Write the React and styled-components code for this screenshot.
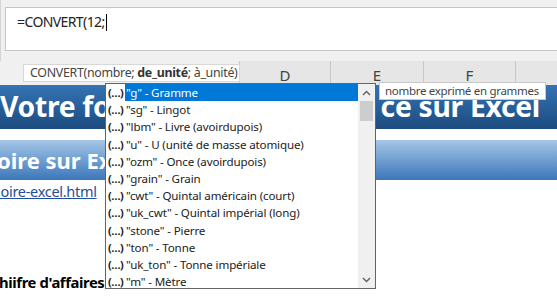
import React from "react";
import styled, { createGlobalStyle } from "styled-components";

const Global = createGlobalStyle`
  html, body { margin: 0; padding: 0; background: #fff; }
  body { width: 557px; height: 298px; overflow: hidden; font-family: "Noto Sans", "Open Sans", sans-serif; }
  #root { width: 557px; height: 298px; position: relative; overflow: hidden; }
`;

const Page = styled.div`
  width: 557px;
  height: 298px;
  position: relative;
  overflow: hidden;
  background: #fff;
`;

const Chrome = styled.div`
  background: #f0f0f0;
  padding: 7px 0 0 4px;
  border-left: 1px solid #d4d4d4;
  display: flex;
  flex-direction: column;
`;

const FormulaBox = styled.div`
  height: 44px;
  background: #fff;
  border: 1px solid #c6c6c6;
  border-right: none;
  padding: 5px 0 0 11px;
  box-sizing: border-box;
  display: flex;
  align-items: flex-start;
  font-size: 14px;
  line-height: 18px;
  color: #222;
  letter-spacing: -0.6px;
`;

const Caret = styled.span`
  display: inline-block;
  width: 1px;
  height: 17px;
  background: #000;
  margin-left: 1px;
  margin-top: 1px;
`;

const HeaderRow = styled.div`
  height: 23px;
  margin-top: 10px;
  margin-left: -5px;
  display: grid;
  grid-template-columns: 240px 91px 93px 92px 1fr;
  background: #e6e6e6;
`;

const ColHead = styled.div`
  border-right: 1px solid ${p => (p.$last ? "transparent" : "#c8c8c8")};
  display: flex;
  align-items: center;
  justify-content: center;
  font-size: 15px;
  color: #444;
  padding-top: 4px;
  box-sizing: border-box;
  background: ${p => (p.$blank ? "#f0f0f0" : "#e6e6e6")};
`;

const Banner = styled.div`
  height: 45px;
  background: linear-gradient(#3574b6, #1c4b7e);
  color: #fff;
  font-weight: 700;
  font-size: 28.3px;
  line-height: 45px;
  white-space: nowrap;
  overflow: hidden;
  letter-spacing: -0.3px;
  display: flex;
  padding-right: 17px;
`;

const BannerLead = styled.span`
  flex: 1;
  min-width: 0;
  overflow: hidden;
`;

const BannerTail = styled.span`
  flex: none;
`;

const Gap = styled.div`
  height: ${p => p.$h}px;
`;

const SubBanner = styled.div`
  height: 40px;
  background: linear-gradient(#a5c6e7, #3b77ba);
  color: #fff;
  font-weight: 700;
  font-size: 22px;
  line-height: 40px;
  white-space: nowrap;
  overflow: hidden;
  text-indent: -115px;
`;

const LinkLine = styled.div`
  font-size: 14.5px;
  line-height: 20px;
  color: #1f4e9a;
  text-decoration: underline;
  white-space: nowrap;
  text-indent: -66px;
  overflow: hidden;
  letter-spacing: -0.3px;
`;

const BoldLine = styled.div`
  margin-top: 71px;
  font-size: 14.8px;
  line-height: 20px;
  font-weight: 700;
  color: #000;
  white-space: nowrap;
  text-indent: -10px;
  overflow: hidden;
  letter-spacing: -0.4px;
`;

const ArgTip = styled.div`
  position: absolute;
  left: 23px;
  top: 64px;
  width: 217px;
  height: 18px;
  box-sizing: border-box;
  background: #fff;
  border: 1px solid #d8d8d8;
  font-size: 12.4px;
  line-height: 16px;
  color: #444;
  padding-left: 6px;
  white-space: nowrap;
  letter-spacing: -0.3px;
  b { font-weight: 700; color: #333; }
`;

const DescTip = styled.div`
  position: absolute;
  left: 379px;
  top: 82px;
  width: 167px;
  height: 18px;
  box-sizing: border-box;
  background: #fff;
  border: 1px solid #c8c8c8;
  font-size: 11.5px;
  line-height: 16px;
  color: #444;
  padding-left: 5px;
  white-space: nowrap;
  letter-spacing: -0.3px;
  overflow: hidden;
`;

const List = styled.div`
  position: absolute;
  left: 105px;
  top: 83px;
  width: 271px;
  height: 206px;
  box-sizing: border-box;
  background: #fff;
  border: 1px solid #646464;
  display: flex;
`;

const Items = styled.div`
  flex: 1;
  display: flex;
  flex-direction: column;
`;

const Item = styled.div`
  height: 17.2px;
  flex: none;
  display: flex;
  align-items: center;
  font-size: 11.6px;
  white-space: nowrap;
  letter-spacing: -0.15px;
`;

const Icon = styled.span`
  width: 19px;
  padding-left: 2px;
  box-sizing: border-box;
  font-size: 11px;
  font-weight: 700;
  color: #222;
  letter-spacing: -0.6px;
  flex: none;
`;

const Label = styled.span`
  flex: 1;
  height: 100%;
  display: flex;
  align-items: center;
  padding-left: 1px;
  background: ${p => (p.$sel ? "#0078d7" : "transparent")};
  color: ${p => (p.$sel ? "#fff" : "#222")};
`;

const Scroll = styled.div`
  width: 17px;
  background: #f0f0f0;
  display: flex;
  flex-direction: column;
  align-items: center;
`;

const Arrow = styled.div`
  height: 17px;
  width: 100%;
  display: flex;
  align-items: center;
  justify-content: center;
`;

const Thumb = styled.div`
  width: 13px;
  height: 20px;
  background: #cdcdcd;
`;

const Track = styled.div`
  flex: 1;
`;

const items = [
  '"g" - Gramme',
  '"sg" - Lingot',
  '"lbm" - Livre (avoirdupois)',
  '"u" - U (unité de masse atomique)',
  '"ozm" - Once (avoirdupois)',
  '"grain" - Grain',
  '"cwt" - Quintal américain (court)',
  '"uk_cwt" - Quintal impérial (long)',
  '"stone" - Pierre',
  '"ton" - Tonne',
  '"uk_ton" - Tonne impériale',
  '"m" - Mètre',
];

const Chev = ({ up }) => (
  <svg width="9" height="6" viewBox="0 0 9 6">
    <path
      d={up ? "M1 5 L4.5 1.5 L8 5" : "M1 1 L4.5 4.5 L8 1"}
      fill="none"
      stroke="#606060"
      strokeWidth="1.4"
    />
  </svg>
);

export default function App() {
  return (
    <Page>
      <Global />
      <Chrome>
        <FormulaBox>
          <span>=CONVERT(12;</span>
          <Caret />
        </FormulaBox>
        <HeaderRow>
          <ColHead $blank />
          <ColHead>D</ColHead>
          <ColHead>E</ColHead>
          <ColHead>F</ColHead>
          <ColHead $last />
        </HeaderRow>
      </Chrome>
      <Banner>
        <BannerLead>Votre formation de référen</BannerLead>
        <BannerTail>ce sur Excel</BannerTail>
      </Banner>
      <Gap $h={11} />
      <SubBanner>Aide-mémoire sur Excel</SubBanner>
      <Gap $h={1} />
      <LinkLine>aide-memoire-excel.html</LinkLine>
      <BoldLine>Chiifre d'affaires</BoldLine>

      <ArgTip>
        CONVERT(nombre; <b>de_unité</b>; à_unité)
      </ArgTip>
      <List>
        <Items>
          {items.map((t, i) => (
            <Item key={t}>
              <Icon>(…)</Icon>
              <Label $sel={i === 0}>{t}</Label>
            </Item>
          ))}
        </Items>
        <Scroll>
          <Arrow>
            <Chev up />
          </Arrow>
          <Thumb />
          <Track />
          <Arrow>
            <Chev />
          </Arrow>
        </Scroll>
      </List>
      <DescTip>nombre exprimé en grammes</DescTip>
    </Page>
  );
}
